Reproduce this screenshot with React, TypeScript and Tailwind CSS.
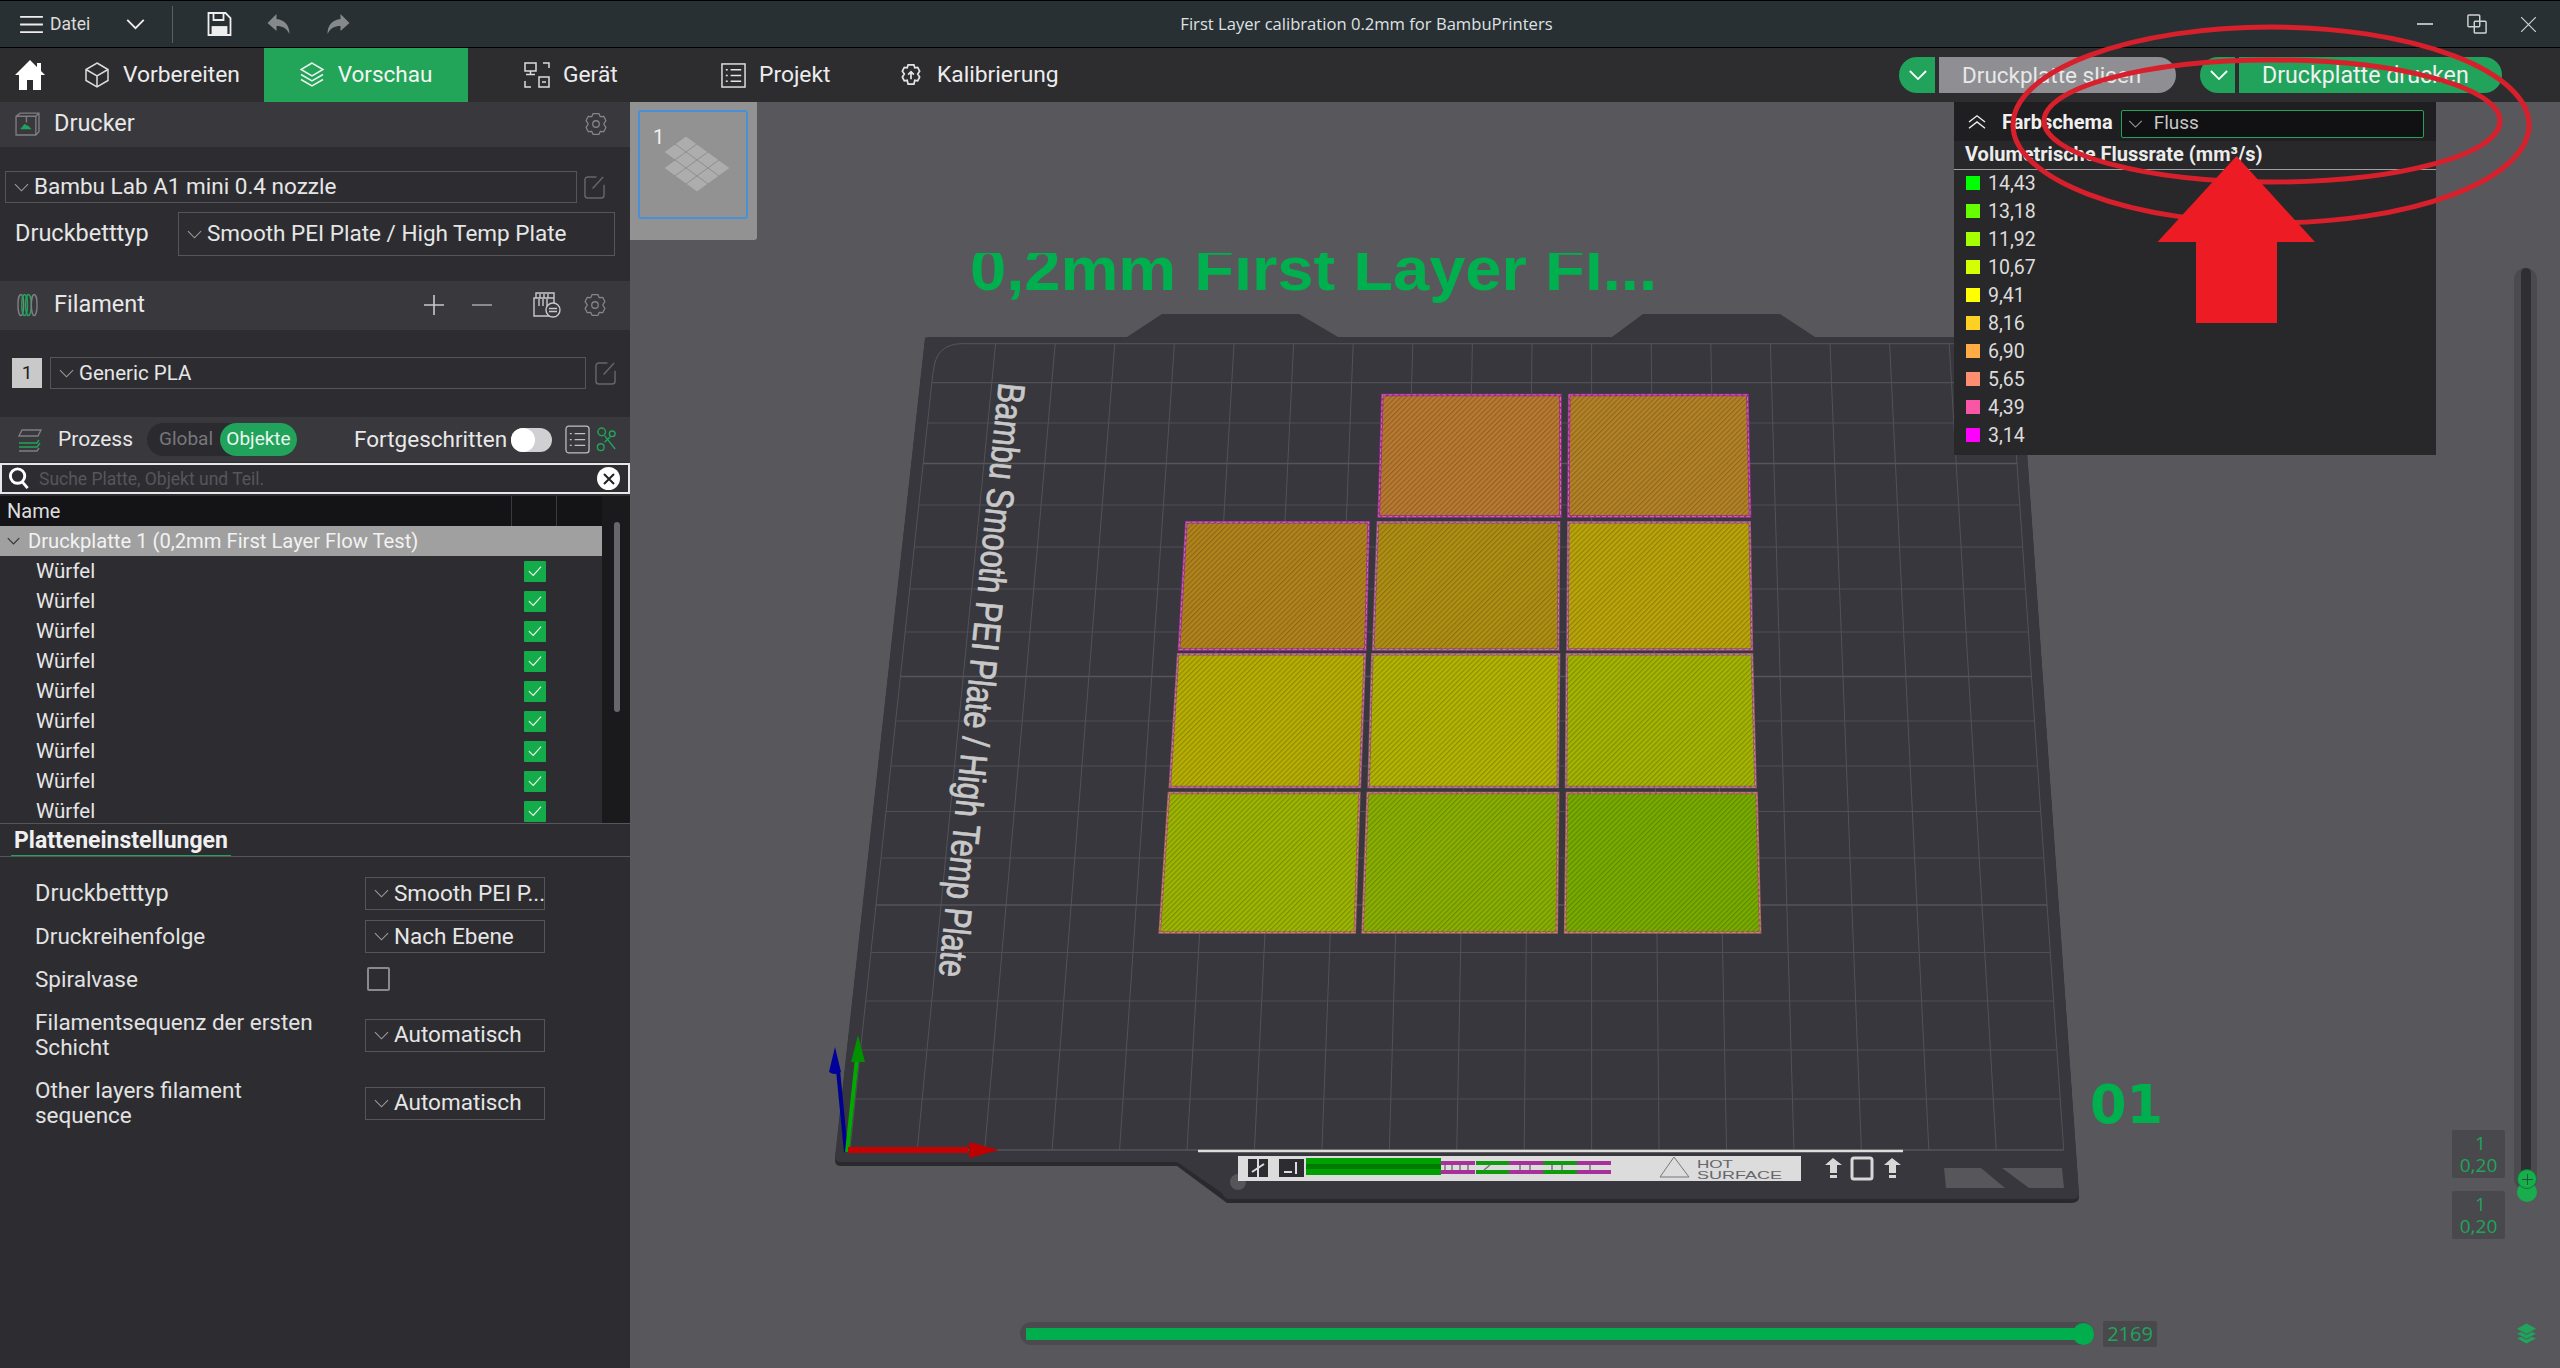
import React from "react";

const TH = [343.6,382.6,423,463.5,505,547,589,632,676.5,721,766,811.5,858,905,952.5,1001,1050,1099,1150];
const xAt = (x0: number, x1: number, y: number) => x0 + (x1 - x0) * ((y - 343.6) / (1150 - 343.6));

const SQ: { p: number[]; c: string; b: string }[] = [
  { p: [615,65,1003,65,1003,383,607,383], c: "#b97b30", b: "#a8279c" },
  { p: [1022,65,1410,65,1416,383,1020,383], c: "#b48327", b: "#a8279c" },
  { p: [188,398,585,398,578,730,172,730], c: "#b2841c", b: "#a62fa0" },
  { p: [605,398,1000,398,998,730,595,730], c: "#b09014", b: "#9c4a80" },
  { p: [1020,398,1415,398,1420,730,1018,730], c: "#baa50a", b: "#9c4a80" },
  { p: [170,743,577,743,566,1090,152,1090], c: "#b8af03", b: "#a0507a" },
  { p: [593,743,1000,743,997,1090,585,1090], c: "#b3b502", b: "#9c5a70" },
  { p: [1017,743,1420,743,1428,1090,1015,1090], c: "#a5b502", b: "#9c5a70" },
  { p: [150,1105,565,1105,555,1470,130,1470], c: "#9db602", b: "#a8605a" },
  { p: [583,1105,998,1105,995,1470,572,1470], c: "#8ab102", b: "#a8605a" },
  { p: [1017,1105,1430,1105,1438,1470,1013,1470], c: "#78ad00", b: "#a8605a" },
];
const sqPts = (p: number[]) => {
  const out: string[] = [];
  for (let i = 0; i < p.length; i += 2) out.push(`${(1100 + p[i] / 2.178).toFixed(1)},${(370 + p[i + 1] / 2.613).toFixed(1)}`);
  return out.join(" ");
};

const LEGEND: [string, string][] = [
  ["#00ff00", "14,43"],["#66ff00", "13,18"],["#a6ff00", "11,92"],["#d4ff00", "10,67"],["#ffff00", "9,41"],
  ["#ffd024", "8,16"],["#ffac46", "6,90"],["#ff8d70", "5,65"],["#f957a5", "4,39"],["#ff00ff", "3,14"],
];

const CELLS: [number, number][] = [];
for (let i = 0; i < 4; i++) for (let j = 0; j < 3; j++) if (!(i === 0 && j === 2)) CELLS.push([i, j]);

function Chev({ className = "w-[15px] h-[9px]" }: { className?: string }) {
  return (
    <svg viewBox="0 0 16 9" className={`${className} shrink-0`} fill="none" stroke="#9a9a9e" strokeWidth="1.2">
      <path d="M1 1l7 7 7-7" />
    </svg>
  );
}

function Sel({ children, className }: { children: React.ReactNode; className: string }) {
  return (
    <div className={`flex items-center border border-[#55555a] pl-[8px] gap-[5px] text-[22.500px] text-[#e6e6e6] whitespace-nowrap overflow-hidden ${className}`}>
      <Chev />
      <span>{children}</span>
    </div>
  );
}

function Gear({ className = "w-[24px] h-[24px]" }: { className?: string }) {
  return (
    <svg viewBox="0 0 24 28" className={className} fill="none" stroke="#85858a" strokeWidth="1.5">
      <path d="M8.500 2h7l1.500 3.500 4-.5 2.500 5-2.500 4 2.500 4-2.500 5-4-.5L15.500 26h-7L7 22.500l-4 .5-2.500-5 2.500-4-2.500-4L3 5l4 .5z" strokeLinejoin="round" />
      <circle cx="12" cy="14" r="3.800" />
    </svg>
  );
}

function Edit() {
  return (
    <svg viewBox="0 0 22 26" className="w-[21px] h-[25px] shrink-0" fill="none" stroke="#66666b" strokeWidth="1.500">
      <path d="M13 2H4a3 3 0 0 0-3 3v16a3 3 0 0 0 3 3h14a3 3 0 0 0 3-3V10" />
      <path d="M9 14L20 2" />
    </svg>
  );
}

function Check() {
  return (
    <div className="w-[22px] h-[21px] bg-[#14ab4a] flex items-center justify-center rounded-[1px]">
      <svg viewBox="0 0 16 12" className="w-[14px] h-[11px]" fill="none" stroke="#e8f5e9" strokeWidth="1.400">
        <path d="M1 5.500l5 5 9-10" />
      </svg>
    </div>
  );
}

function Header({ className, children }: { className: string; children: React.ReactNode }) {
  return <div className={`flex items-center bg-[#38383d] text-[#e8e8e8] text-[23.500px] ${className}`}>{children}</div>;
}

function Row({ label, children, className }: { label: React.ReactNode; children: React.ReactNode; className: string }) {
  return (
    <div className={`flex items-center pl-[35px] ${className}`}>
      <div className="w-[330px] text-[22.500px] leading-[25px] text-[#e2e2e2]">{label}</div>
      {children}
    </div>
  );
}

function Sidebar() {
  return (
    <aside className="w-[630px] shrink-0 bg-[#2d2d31] flex flex-col overflow-hidden">
      <Header className="h-[45px] pl-[15px] pr-[22px] pb-[2px]">
        <svg viewBox="0 0 24 24" className="w-[25px] h-[25px]" fill="none" stroke="#7d7d82" strokeWidth="1.300">
          <path d="M1 5l4-3h18v18l-3 3H1z M1 5h19v18 M20 5l3-3" />
          <path d="M11 5v6" />
          <path d="M5 17.500l4-5 4 2 3 3z" fill="#22a35b" stroke="none" />
        </svg>
        <span className="ml-[14px]">Drucker</span>
        <span className="ml-auto"><Gear /></span>
      </Header>

      <div className="mt-[24px] pl-[5px] flex items-center h-[32px]">
        <Sel className="w-[572px] h-[32px]">Bambu Lab A1 mini 0.4 nozzle</Sel>
        <span className="ml-[7px]"><Edit /></span>
      </div>
      <div className="mt-[9px] flex items-center h-[44px]">
        <div className="w-[178px] pl-[15px] text-[23.500px] text-[#e6e6e6]">Druckbetttyp</div>
        <Sel className="w-[437px] h-[44px]">Smooth PEI Plate / High Temp Plate</Sel>
      </div>

      <Header className="mt-[25px] h-[49px] pl-[17px] pr-[23px] pb-[2px]">
        <svg viewBox="0 0 22 26" className="w-[21px] h-[26px]" fill="none" strokeWidth="1.500">
          <ellipse cx="4" cy="13" rx="3" ry="11" stroke="#7d7d82" />
          <ellipse cx="8" cy="13" rx="3" ry="11" stroke="#22a35b" />
          <ellipse cx="12" cy="13" rx="3" ry="11" stroke="#22a35b" />
          <ellipse cx="18" cy="13" rx="3" ry="11" stroke="#7d7d82" />
        </svg>
        <span className="ml-[16px]">Filament</span>
        <svg viewBox="0 0 20 20" className="w-[20px] h-[20px] ml-auto" stroke="#c8c8cc" strokeWidth="1.600"><path d="M10 0v20M0 10h20" /></svg>
        <svg viewBox="0 0 20 20" className="w-[20px] h-[20px] ml-[28px]" stroke="#a0a0a4" strokeWidth="1.600"><path d="M0 10h20" /></svg>
        <svg viewBox="0 0 28 26" className="w-[28px] h-[26px] ml-[41px]" fill="none" stroke="#c8c8cc" strokeWidth="1.400">
          <path d="M3 1h18v5H3zM1 6h20v18H1zM7 2v4M11 2v4M15 2v4M6 7v7M10 7v7M14 7v7" />
          <circle cx="20" cy="18" r="7" fill="#38383d" />
          <path d="M16 16.500h8M24 19.500h-8" />
        </svg>
        <span className="ml-[22px]"><Gear /></span>
      </Header>

      <div className="mt-[27px] flex items-center h-[32px] pl-[12px]">
        <div className="w-[30px] h-[30px] bg-[#c9c9c9] text-[#222] text-[19px] flex items-center justify-center">1</div>
        <Sel className="ml-[8px] w-[536px] h-[32px] !text-[20.500px]">Generic PLA</Sel>
        <span className="ml-[9px]"><Edit /></span>
      </div>

      <Header className="mt-[28px] h-[45px] pl-[18px] relative !text-[21px]">
        <svg viewBox="0 0 24 24" className="w-[24px] h-[24px]" fill="none" strokeWidth="1.400">
          <path d="M4 2h19l-3 6H1z" stroke="#7d7d82" />
          <path d="M21 12l-2 3H1" stroke="#22a35b" />
          <path d="M1 19h18l3-4" stroke="#22a35b" />
          <path d="M1 23h18l2-3" stroke="#7d7d82" />
        </svg>
        <span className="ml-[16px] w-[89px]">Prozess</span>
        <div className="w-[150px] h-[33px] rounded-full bg-[#2b2b2f] flex items-center text-[19px]">
          <span className="pl-[12px] w-[73px] text-[#77777c]">Global</span>
          <span className="w-[77px] h-[33px] rounded-full bg-[#22a35b] text-[#e9f7ee] flex items-center justify-center">Objekte</span>
        </div>
        <span className="ml-[57px] text-[22.500px]">Fortgeschritten</span>
        <div className="ml-[4px] w-[41px] h-[24px] rounded-full bg-[#d0d0d3] flex items-center">
          <span className="w-[24px] h-[24px] rounded-full bg-white" />
        </div>
        <svg viewBox="0 0 26 30" className="ml-[13px] w-[25px] h-[29px]" fill="none" stroke="#c0c0c4" strokeWidth="1.300">
          <rect x="1" y="1" width="24" height="28" rx="3" />
          <path d="M5 9h2M10 9h11M5 15h2M10 15h11M5 21h2M10 21h11" />
        </svg>
        <svg viewBox="0 0 22 26" className="ml-[6px] w-[21px] h-[25px]" fill="none" stroke="#22a35b" strokeWidth="1.500">
          <circle cx="6" cy="5" r="4" /><circle cx="17" cy="7" r="3" /><circle cx="5" cy="21" r="3.500" />
          <path d="M9 9l11 14M15 10l-6 6" />
        </svg>
      </Header>

      <div className="mt-[1px] h-[31px] border-2 border-[#e8e8e8] flex items-center pl-[6px] pr-[8px]">
        <svg viewBox="0 0 22 24" className="w-[22px] h-[23px]" fill="none" stroke="#fff" strokeWidth="3">
          <circle cx="9.500" cy="9.500" r="7.500" /><path d="M14 15l6 7" />
        </svg>
        <span className="ml-[9px] mt-[2px] text-[17.500px] text-[#56565b]">Suche Platte, Objekt und Teil.</span>
        <div className="ml-auto w-[23px] h-[23px] rounded-full bg-white flex items-center justify-center">
          <svg viewBox="0 0 12 12" className="w-[12px] h-[12px]" stroke="#222" strokeWidth="2"><path d="M1 1l10 10M11 1L1 11" /></svg>
        </div>
      </div>

      <div className="mt-[2px] h-[327px] flex overflow-hidden">
        <div className="w-[602px] shrink-0">
          <div className="h-[30px] bg-[#141416] flex text-[20px] text-[#dedede]">
            <div className="w-[512px] pl-[7px] leading-[30px] border-r border-[#3a3a3e]">Name</div>
            <div className="w-[45px] border-r border-[#3a3a3e]" />
          </div>
          <div className="h-[30px] bg-[#a0a0a0] flex items-center pl-[7px] text-[20.200px] text-[#f2f2f2]">
            <svg viewBox="0 0 16 9" className="w-[13px] h-[8px] shrink-0" fill="none" stroke="#333" strokeWidth="1.400"><path d="M1 1l7 7 7-7" /></svg>
            <span className="ml-[8px]">Druckplatte 1 (0,2mm First Layer Flow Test)</span>
          </div>
          {Array.from({ length: 9 }).map((_, i) => (
            <div key={i} className="h-[30px] flex items-center text-[20.500px] text-[#e6e6e6] shrink-0">
              <span className="ml-[36px] w-[488px]">Würfel</span>
              <Check />
            </div>
          ))}
        </div>
        <div className="flex-1 bg-[#1a1a1c] relative">
          <div className="absolute left-[12px] top-[26px] w-[6px] h-[190px] rounded-full bg-[#66666b]" />
        </div>
      </div>

      <div className="h-px bg-[#55555a]" />
      <div className="h-[33px] border-b border-[#55555a] pl-[11px]">
        <div className="inline-block h-[32px] px-[3px] border-b border-[#22a35b] text-[23px] leading-[34px] font-bold text-[#f0f0f0]">Platteneinstellungen</div>
      </div>

      <Row label={<span className="text-[23.500px]">Druckbetttyp</span>} className="mt-[20px] h-[33px]"><Sel className="w-[180px] h-[33px]">Smooth PEI P...</Sel></Row>
      <Row label="Druckreihenfolge" className="mt-[10px] h-[33px]"><Sel className="w-[180px] h-[33px]">Nach Ebene</Sel></Row>
      <Row label="Spiralvase" className="mt-[14px] h-[24px]">
        <div className="ml-[2px] w-[23px] h-[24px] border-2 border-[#8a8a8e] rounded-[2px]" />
      </Row>
      <Row label={<>Filamentsequenz der ersten<br />Schicht</>} className="mt-[19px] h-[50px]"><Sel className="w-[180px] h-[33px]">Automatisch</Sel></Row>
      <Row label={<>Other layers filament<br />sequence</>} className="mt-[18px] h-[50px]"><Sel className="w-[180px] h-[33px]">Automatisch</Sel></Row>
    </aside>
  );
}

function BedScene() {
  return (
    <svg viewBox="630 102 1930 1266" className="absolute inset-0 w-[1930px] h-[1266px]">
      <defs>
        <pattern id="stripes" width="3.600" height="3.600" patternUnits="userSpaceOnUse" patternTransform="rotate(-45)">
          <rect width="3.600" height="1.300" fill="#000" fillOpacity="0.2" />
        </pattern>
        <clipPath id="tclip"><rect x="900" y="253" width="900" height="100" /></clipPath>
      </defs>

      {/* plate */}
      <path d="M925 340 L1127 340 L1162 317 L1299 317 L1338 340 L1612 340 L1643 317 L1780 317 L1815 340 L2019 340 L2079 1197 Q2079 1203 2070 1203 L1227 1203 L1177 1166 L841 1166 Q835 1166 835 1160 Z" fill="#2a2a2e" />
      <path d="M925 338 Q925 337 930 337 L1127 337 L1162 314 L1299 314 L1338 337 L1612 337 L1643 314 L1780 314 L1815 337 L2019 337 L2079 1194 Q2079 1199 2072 1199 L1229 1199 Q1225 1199 1222 1193 L1177 1162 L841 1162 Q835 1162 835 1157 Z" fill="#37373d" />

      {/* grid */}
      {Array.from({ length: 19 }).map((_, k) => {
        const x0 = 936 + 59.6 * k;
        const x1 = 849.8 + 67.44 * k;
        return <line key={k} x1={x0} y1={343.6} x2={x1} y2={1150} stroke="#525257" strokeWidth="1" />;
      })}
      {TH.map((y, i) => (
        <line key={i} x1={xAt(936, 849.8, y)} y1={y} x2={xAt(2009, 2063.7, y)} y2={y} stroke={i % 5 === 3 ? "#55555a" : "#4f4f54"} strokeWidth={i % 5 === 3 ? 1.6 : 1.200} />
      ))}
      <path d="M932 342 H962 V372 H930 Z" fill="#37373d" />
      <path d="M933.500 372 Q935 344 962 343.600" fill="none" stroke="#55555a" strokeWidth="1" />

      {/* squares */}
      {SQ.map((s, i) => (
        <g key={i}>
          <polygon points={sqPts(s.p)} fill={s.c} stroke={s.b} strokeWidth="2.500" />
          <polygon points={sqPts(s.p)} fill="url(#stripes)" stroke="#d8b8a0" strokeOpacity="0.55" strokeWidth="1" strokeDasharray="4 2" />
        </g>
      ))}

      {/* green title */}
      <text x="970" y="290" clipPath="url(#tclip)" fontFamily="'Liberation Sans',sans-serif" fontWeight="700" fontSize="62" textLength="687" lengthAdjust="spacingAndGlyphs" className="fill-[#00b04f]">0,2mm First Layer Fl...</text>
      <text x="2090" y="1123" fontFamily="'DejaVu Sans',sans-serif" fontWeight="700" fontSize="54" textLength="73" lengthAdjust="spacingAndGlyphs" className="fill-[#00b04f]">01</text>

      {/* side text */}
      <text transform="translate(999 382) rotate(95.8)" fontFamily="'Liberation Sans',sans-serif" fontSize="38" textLength="597" lengthAdjust="spacingAndGlyphs" stroke="#c8c8c8" strokeWidth="0.800" className="fill-[#c8c8c8]">Bambu Smooth PEI Plate / High Temp Plate</text>

      {/* label strip */}
      <line x1="1198" y1="1151" x2="1903" y2="1151" stroke="#dcdcdc" strokeWidth="2.500" />
      <circle cx="1238" cy="1182" r="8" fill="#55555a" />
      <rect x="1238" y="1156" width="563" height="25" fill="#dcdcdc" />
      <rect x="1248" y="1159" width="20" height="18" fill="#2d2d31" />
      <rect x="1279" y="1159" width="25" height="18" fill="#2d2d31" />
      <path d="M1258 1159v18M1252 1172l12-8M1284 1172h8M1296 1162v12" stroke="#dcdcdc" strokeWidth="2" />
      <rect x="1306" y="1158" width="135" height="17" fill="#00a000" />
      <rect x="1306" y="1164" width="135" height="5" fill="#007a00" />
      {[1441, 1476, 1509, 1543, 1577].map((x, i) => (
        <g key={x}>
          <rect x={x} y="1161" width="34" height="4" fill={i % 2 ? "#109a10" : "#a8309a"} />
          <rect x={x} y="1170" width="34" height="4" fill={i % 2 ? "#109a10" : "#a8309a"} />
        </g>
      ))}
      <path d="M1445 1165v5M1452 1165v5M1460 1165v5M1468 1165v5M1490 1165l-6 5M1520 1165v5M1530 1165v5M1552 1165v5M1562 1165v5M1590 1165v5" stroke="#777" strokeWidth="1.500" />
      <path d="M1660 1177l14-20 15 20z" fill="none" stroke="#77777c" strokeWidth="1" />
      <text x="1697" y="1168" fontFamily="'Liberation Sans',sans-serif" fontSize="11" textLength="36" lengthAdjust="spacingAndGlyphs" className="fill-[#66666b]">HOT</text>
      <text x="1697" y="1179" fontFamily="'Liberation Sans',sans-serif" fontSize="11" textLength="85" lengthAdjust="spacingAndGlyphs" className="fill-[#66666b]">SURFACE</text>
      <path d="M1833 1158l-8 7h5v8h7v-8h5zM1892 1158l-8 7h5v8h7v-8h5z" fill="#d8d8d8" />
      <path d="M1830 1175h7v3h-7zM1889 1175h7v3h-7z" fill="#d8d8d8" />
      <rect x="1852" y="1158" width="20" height="21" rx="2" fill="none" stroke="#d8d8d8" strokeWidth="3" />
      <polygon points="1944,1168 1981,1168 2005,1188 1946,1188" fill="#56565b" />
      <polygon points="2002,1168 2062,1168 2064,1188 2029,1188" fill="#56565b" />

      {/* axes */}
      <path d="M846 1152 L838 1070" stroke="#000090" strokeWidth="4" />
      <path d="M835 1047 L829 1072 Q835 1076 841 1072 Z" fill="#00009a" />
      <path d="M847 1152 L857 1058" stroke="#00aa00" strokeWidth="4" />
      <path d="M858 1035 L851 1062 L865 1062 Z" fill="#009000" />
      <path d="M848 1150 L968 1150" stroke="#c80000" strokeWidth="6" />
      <path d="M999 1150 L969 1142 L969 1158 Z" fill="#c00000" />
    </svg>
  );
}

function Viewport() {
  return (
    <main className="flex-1 relative bg-[#57575c] overflow-hidden">
      <BedScene />

      {/* thumbnail */}
      <div className="absolute left-0 top-0 w-[127px] h-[138px] bg-[#929292] rounded-br-[3px]">
        <div className="absolute left-[8px] top-[8px] w-[110px] h-[109px] border-2 border-[#4a90d9] rounded-[3px] text-[#f0f0f0] text-[20px] pl-[13px] pt-[15px] leading-none">1</div>
        <svg viewBox="0 0 68 57" className="absolute left-[34px] top-[34px] w-[68px] h-[57px]">
          {CELLS.map(([i, j]) => {
            const ox = 22 + 11 * i - 11 * j;
            const oy = 8 * i + 8 * j;
            return <polygon key={`${i}-${j}`} points={`${ox},${oy} ${ox + 11},${oy + 8} ${ox},${oy + 16} ${ox - 11},${oy + 8}`} fill="#adadad" stroke="#8e8e8e" strokeWidth="0.800" />;
          })}
        </svg>
      </div>

      {/* legend */}
      <div className="absolute left-[1324px] top-0 w-[482px] h-[353px] bg-[#28282a] font-['Roboto',sans-serif]">
        <div className="h-[39px] bg-[#1f1f21] flex items-center pl-[13px]">
          <svg viewBox="0 0 20 18" className="w-[20px] h-[16px]" fill="none" stroke="#eee" strokeWidth="1.600"><path d="M1 9l9-7 9 7M1 16l9-7 9 7" /></svg>
          <span className="ml-[15px] text-[20px] font-bold text-[#f0f0f0]">Farbschema</span>
          <div className="ml-[8px] mt-[4px] w-[303px] h-[28px] bg-[#111113] border border-[#22a35b] rounded-[2px] flex items-center pl-[6px]">
            <Chev className="w-[15px] h-[8px]" />
            <span className="ml-[11px] text-[19px] text-[#c8c8c8]">Fluss</span>
          </div>
        </div>
        <div className="h-[28px] pl-[11px] text-[20px] font-bold text-[#ececec] leading-[26px] border-b border-[#a0a0a0] box-content">Volumetrische Flussrate (mm³/s)</div>
        <div className="pt-[5px]">
          {LEGEND.map(([c, t]) => (
            <div key={t} className="h-[28px] flex items-start pl-[12px]">
              <span className="w-[14px] h-[14px] mt-[1px]" style={{ backgroundColor: c }} />
              <span className="ml-[8px] text-[19.500px] leading-[18px] text-[#dcdcdc]">{t}</span>
            </div>
          ))}
        </div>
      </div>

      {/* vertical slider */}
      <div className="absolute left-[1884px] top-[166px] w-[23px] h-[922px] rounded-full bg-[#4a4a4f] flex justify-center">
        <div className="w-[10px] h-full bg-[#2e2e33] rounded-full" />
      </div>
      <div className="absolute left-[1887px] top-[1080px] w-[20px] h-[20px] rounded-full bg-[#19ad4e]" />
      <div className="absolute left-[1887px] top-[1067px] w-[20px] h-[20px] rounded-full bg-[#19ad4e] border border-[#0f7a36] flex items-center justify-center">
        <svg viewBox="0 0 12 12" className="w-[11px] h-[11px]" stroke="#0c5c2a" strokeWidth="1"><path d="M6 0v12M0 6h12" /></svg>
      </div>
      {[1028, 1089].map((t) => (
        <div key={t} className="absolute left-[1822px] w-[53px] h-[48px] bg-[#48484d] rounded-[2px] text-[#22a35b] text-[19px] leading-[22px] text-center pt-[2px] font-['Open_Sans',sans-serif]" style={{ top: t }}>
          <div className="pl-[4px]">1</div>
          <div>0,20</div>
        </div>
      ))}
      <svg viewBox="0 0 24 24" className="absolute left-[1885px] top-[1220px] w-[23px] h-[23px]" fill="#22a35b" stroke="#57575c" strokeWidth="1">
        <path d="M12 13L1 17l11 6 11-6z" /><path d="M12 8L1 12l11 6 11-6z" /><path d="M12 1L1 7l11 6 11-6z" />
      </svg>

      {/* horizontal slider */}
      <div className="absolute left-[390px] top-[1220px] w-[1074px] h-[23px] rounded-full bg-[#4a4a4f] flex items-center pl-[6px]">
        <div className="w-[1060px] h-[12px] bg-[#00ae4d]" />
      </div>
      <div className="absolute left-[1443px] top-[1221px] w-[21px] h-[22px] rounded-full bg-[#00ae4d]" />
      <div className="absolute left-[1473px] top-[1219px] w-[54px] h-[26px] bg-[#48484d] rounded-[2px] text-[#22a35b] text-[20px] leading-[26px] text-center font-['Open_Sans',sans-serif]">2169</div>
    </main>
  );
}

function NavItem({ icon, label, className }: { icon: React.ReactNode; label: string; className: string }) {
  return (
    <div className={`flex items-center h-full ${className}`}>
      {icon}
      <span className="text-[22.800px] text-[#ececec]">{label}</span>
    </div>
  );
}

export default function App() {
  return (
    <div className="relative w-[2560px] h-[1368px] overflow-hidden flex flex-col bg-[#2d2d30] font-['Roboto',sans-serif]">
      {/* title bar */}
      <header className="h-[48px] shrink-0 bg-[#293033] border-y border-black flex items-center relative">
        <svg viewBox="0 0 24 20" className="ml-[20px] w-[23px] h-[19px]" stroke="#eee" strokeWidth="2"><path d="M0 2h24M0 10h24M0 18h24" /></svg>
        <span className="ml-[7px] text-[17.500px] text-[#dcdcdc] w-[76px]">Datei</span>
        <svg viewBox="0 0 20 12" className="w-[19px] h-[11px]" fill="none" stroke="#eee" strokeWidth="2"><path d="M1 1l9 9 9-9" /></svg>
        <div className="ml-[27px] w-px h-[37px] bg-[#5a6063]" />
        <svg viewBox="0 0 24 24" className="ml-[34px] w-[25px] h-[24px]" fill="none" stroke="#eee" strokeWidth="1.800">
          <path d="M1 1h17l5 5v17H1z" /><path d="M6 1v7h10V1" /><rect x="5" y="15" width="14" height="8" fill="#eee" />
        </svg>
        <svg viewBox="0 0 24 22" className="ml-[34px] w-[25px] h-[22px]" fill="#85898b"><path d="M10 1L1 10l9 8v-5c6 0 10 2 13 8 0-9-5-14-13-15z" /></svg>
        <svg viewBox="0 0 24 22" className="ml-[35px] w-[25px] h-[22px]" fill="#85898b"><path d="M14 1l9 9-9 8v-5c-6 0-10 2-13 8 0-9 5-14 13-15z" /></svg>
        <span className="absolute left-[1179px] top-[12px] w-[375px] text-center text-[16.600px] leading-[22px] text-[#dfe2e3] font-['Open_Sans',sans-serif] whitespace-nowrap">First Layer calibration 0.2mm for BambuPrinters</span>
        <div className="ml-auto flex items-center pr-[24px]">
          <div className="w-[16px] h-[2px] bg-[#b5b8b9]" />
          <svg viewBox="0 0 22 22" className="ml-[33px] w-[22px] h-[20px]" fill="none" stroke="#cfd2d3" strokeWidth="1.600">
            <rect x="1" y="1" width="13" height="13" rx="1" /><rect x="8" y="8" width="13" height="13" rx="1" />
          </svg>
          <svg viewBox="0 0 14 14" className="ml-[33px] w-[15px] h-[15px]" stroke="#cfd2d3" strokeWidth="1.100"><path d="M0 0l14 14M14 0L0 14" /></svg>
        </div>
      </header>

      {/* nav bar */}
      <nav className="h-[54px] shrink-0 bg-[#2d2d30] flex items-center relative">
        <svg viewBox="0 0 30 30" className="ml-[15px] w-[30px] h-[30px]" fill="#fff"><path d="M15 0L0 15h4v15h8v-10h6v10h8V15h4l-4-4V3h-4v4z" /></svg>
        <NavItem
          className="ml-[40px] w-[179px]"
          label="Vorbereiten"
          icon={
            <svg viewBox="0 0 24 26" className="w-[24px] h-[26px] mr-[14px]" fill="none" stroke="#dcdcdc" strokeWidth="1.500">
              <path d="M12 1l11 6.500v11L12 25 1 18.500v-11zM1 7.500L12 14l11-6.500M12 14v11" />
            </svg>
          }
        />
        <div className="w-[204px] h-full bg-[#22a558] flex items-center justify-center">
          <svg viewBox="0 0 24 26" className="w-[24px] h-[26px] mr-[14px]" fill="none" stroke="#f0f0f0" strokeWidth="1.500">
            <path d="M12 1L1 7.500 12 14l11-6.500zM1 12.500L12 19l11-6.500M1 17.500L12 24l11-6.500" />
          </svg>
          <span className="text-[22.500px] text-[#f4f4f4]">Vorschau</span>
        </div>
        <NavItem
          className="ml-[56px] w-[197px]"
          label="Gerät"
          icon={
            <svg viewBox="0 0 26 26" className="w-[26px] h-[26px] mr-[13px]" fill="none" stroke="#dcdcdc" strokeWidth="1.500">
              <path d="M1 1h11v8H1zM6.500 9v3M2 12.500h9M19 1h6v5M1 19v6h6" /><path d="M15 15h10v10H15zM18 20h4" />
            </svg>
          }
        />
        <NavItem
          className="w-[180px]"
          label="Projekt"
          icon={
            <svg viewBox="0 0 26 26" className="w-[25px] h-[25px] mr-[13px]" fill="none" stroke="#e4e4e4" strokeWidth="1.500">
              <rect x="1" y="1" width="24" height="24" /><path d="M5 7h2M10 7h11M5 13h2M10 13h11M5 19h2M10 19h11" />
            </svg>
          }
        />
        <NavItem
          className=""
          label="Kalibrierung"
          icon={
            <svg viewBox="0 0 20 24" className="w-[20px] h-[23px] mr-[16px]" fill="none" stroke="#e4e4e4" strokeWidth="1.800">
              <path d="M7 1h6l1 3 3-.500 2 4-2 3 2 3-2 4-3-.500-1 4H7l-1-4-3 .500-2-4 2-3-2-3 2-4 3 .500z" />
              <path d="M10 16V8M7 11l3-3 3 3" />
            </svg>
          }
        />
        <div className="ml-auto mr-[58px] flex items-center gap-[24px]">
          <div className="flex h-[36px] gap-[4px]">
            <div className="w-[36px] bg-[#22a35b] rounded-l-full flex items-center justify-center pl-[2px]">
              <svg viewBox="0 0 20 12" className="w-[18px] h-[11px]" fill="none" stroke="#fff" strokeWidth="2"><path d="M1 1l9 9 9-9" /></svg>
            </div>
            <div className="w-[237px] bg-[#8f8f93] rounded-r-full text-[#e8e8e8] text-[22.500px] leading-[36px] pl-[23px]">Druckplatte slicen</div>
          </div>
          <div className="flex h-[36px] gap-[4px]">
            <div className="w-[35px] bg-[#22a35b] rounded-l-full flex items-center justify-center pl-[2px]">
              <svg viewBox="0 0 20 12" className="w-[18px] h-[11px]" fill="none" stroke="#fff" strokeWidth="2"><path d="M1 1l9 9 9-9" /></svg>
            </div>
            <div className="w-[263px] bg-[#22a35b] rounded-r-full text-[#f0f0f0] text-[23.200px] leading-[36px] pl-[23px]">Druckplatte drucken</div>
          </div>
        </div>
      </nav>

      <div className="flex-1 flex min-h-0">
        <Sidebar />
        <Viewport />
      </div>

      {/* annotation drawn over the screenshot */}
      <svg viewBox="0 0 2560 1368" className="absolute inset-0 w-[2560px] h-[1368px] pointer-events-none" fill="none">
        <ellipse cx="2271" cy="125" rx="258" ry="98" stroke="#d7202c" strokeWidth="5" />
        <ellipse cx="2272" cy="121" rx="228" ry="61" stroke="#d7202c" strokeWidth="5" />
        <path d="M2236.500 156L2315 242H2277V323H2196V242H2157.500Z" fill="#ed1c24" />
      </svg>
    </div>
  );
}
